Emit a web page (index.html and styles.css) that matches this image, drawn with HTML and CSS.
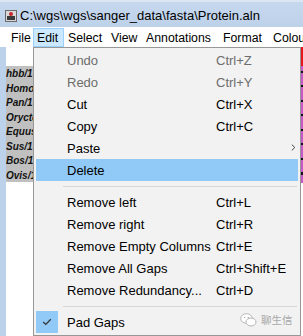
FILE: index.html
```html
<!DOCTYPE html>
<html>
<head>
<meta charset="utf-8">
<link rel="stylesheet" href="styles.css">
</head>
<body>
<div class="window">
  <div class="titlebar">
    <svg class="appicon" width="12" height="12" viewBox="0 0 12 12">
      <rect x="0.5" y="0.5" width="11" height="11" fill="#d8d8d8" stroke="#6a6a6a"/>
      <rect x="2" y="6" width="8" height="4" fill="#3a3a3a"/>
      <circle cx="6" cy="4" r="2" fill="#c8262a"/>
    </svg>
    <span class="title">C:\wgs\wgs\sanger_data\fasta\Protein.aln</span>
  </div>
  <div class="menubar">
    <span class="mitem m-file">File</span>
    <span class="mitem m-edit active">Edit</span>
    <span class="mitem m-select">Select</span>
    <span class="mitem m-view">View</span>
    <span class="mitem m-ann">Annotations</span>
    <span class="mitem m-format">Format</span>
    <span class="mitem m-colour">Colour</span>
  </div>
  <div class="main">
    <div class="leftstrip"></div>
    <div class="names">
      <div class="names-top"></div>
      <div class="names-list">
        <div class="nm">hbb/1-146</div>
        <div class="nm">Homo/1-146</div>
        <div class="nm">Pan/1-146</div>
        <div class="nm">Oryctolagus</div>
        <div class="nm">Equus/1-146</div>
        <div class="nm">Sus/1-146</div>
        <div class="nm">Bos/1-146</div>
        <div class="nm">Ovis/1-146</div>
      </div>
    </div>
    <div class="alignment">
      <div class="seq-red"></div>
      <div class="seq-mag"></div>
    </div>
  </div>

  <div class="dropdown">
    <div class="item disabled"><span class="lbl">Undo</span><span class="sc">Ctrl+Z</span></div>
    <div class="item disabled"><span class="lbl">Redo</span><span class="sc">Ctrl+Y</span></div>
    <div class="item"><span class="lbl">Cut</span><span class="sc">Ctrl+X</span></div>
    <div class="item"><span class="lbl">Copy</span><span class="sc">Ctrl+C</span></div>
    <div class="item"><span class="lbl">Paste</span><span class="sc"></span>
      <svg class="arrow" width="5" height="7" viewBox="0 0 5 7"><path d="M0.8 0.6 L3.8 3.5 L0.8 6.4" fill="none" stroke="#444" stroke-width="1"/></svg>
    </div>
    <div class="item hl"><span class="lbl">Delete</span><span class="sc"></span></div>
    <div class="sep"></div>
    <div class="item"><span class="lbl">Remove left</span><span class="sc">Ctrl+L</span></div>
    <div class="item"><span class="lbl">Remove right</span><span class="sc">Ctrl+R</span></div>
    <div class="item"><span class="lbl">Remove Empty Columns</span><span class="sc">Ctrl+E</span></div>
    <div class="item"><span class="lbl">Remove All Gaps</span><span class="sc">Ctrl+Shift+E</span></div>
    <div class="item"><span class="lbl">Remove Redundancy...</span><span class="sc">Ctrl+D</span></div>
    <div class="sep"></div>
    <div class="item checked">
      <span class="check"><svg width="10" height="8" viewBox="0 0 10 8"><path d="M1.2 4 L3.8 6.4 L8.8 1.2" fill="none" stroke="#333" stroke-width="1.3"/></svg></span>
      <span class="lbl">Pad Gaps</span><span class="sc"></span>
    </div>
    <div class="watermark">
      <svg width="17" height="14" viewBox="0 0 17 14">
        <ellipse cx="6.5" cy="5.5" rx="5.8" ry="4.8" fill="#fff" stroke="#b5b5b5" stroke-width="1"/>
        <ellipse cx="11" cy="9" rx="5" ry="4" fill="#fff" stroke="#b5b5b5" stroke-width="1"/>
        <circle cx="4.5" cy="4.5" r="0.8" fill="#b5b5b5"/>
        <circle cx="8.3" cy="4.5" r="0.8" fill="#b5b5b5"/>
      </svg>
      <span class="wm-text">聊生信</span>
    </div>
  </div>
</div>
</body>
</html>
```

FILE: styles.css
```css
html, body {
  margin: 0;
  padding: 0;
}
body {
  width: 303px;
  height: 336px;
  overflow: hidden;
  background: #ffffff;
  font-family: "Liberation Sans", Arial, "Noto Sans CJK SC", sans-serif;
}
.window {
  position: relative;
  width: 303px;
  height: 336px;
  overflow: hidden;
}
.titlebar {
  height: 27px;
  box-sizing: border-box;
  border-top: 2px solid #dbe6f3;
  background: linear-gradient(#c6d8ee, #bdd1e9);
  display: flex;
  align-items: center;
  padding-left: 5px;
}
.appicon {
  flex: none;
  margin-top: 2px;
}
.title {
  margin-left: 3px;
  font-size: 13px;
  color: #000;
  white-space: nowrap;
  margin-top: 1px;
}
.menubar {
  height: 20px;
  background: #ffffff;
  display: flex;
  align-items: stretch;
  box-sizing: border-box;
  padding-top: 1px;
}
.mitem {
  font-size: 12.3px;
  color: #000;
  display: flex;
  align-items: center;
  box-sizing: border-box;
  white-space: nowrap;
  border: 1px solid transparent;
  padding-left: 3px;
  flex: none;
}
.m-file { width: 33px; padding-left: 10px; }
.m-edit { width: 31px; }
.m-select { width: 43px; }
.m-view { width: 35px; }
.m-ann { width: 77px; }
.m-format { width: 50px; }
.m-colour { width: 40px; }
.mitem.active {
  background: #cce8ff;
  border-color: #99d1ff;
}
.main {
  display: flex;
  height: 289px;
}
.leftstrip {
  width: 6px;
  background: #bcd1ea;
  flex: none;
}
.names {
  width: 295px;
  flex: none;
  display: flex;
  flex-direction: column;
}
.names-top {
  height: 19px;
}
.names-list {
  background: #c0c0c0;
  height: 116px;
  padding-top: 1px;
  box-sizing: border-box;
}
.nm {
  height: 14.5px;
  line-height: 14.5px;
  font-style: italic;
  font-weight: bold;
  font-size: 10px;
  color: #111;
  white-space: nowrap;
}
.alignment {
  width: 2px;
  flex: none;
  display: flex;
  flex-direction: column;
}
.seq-red {
  height: 19px;
  background: #e8141b;
}
.seq-mag {
  height: 117px;
  background: repeating-linear-gradient(#c658c8 0 5px, #111 5px 7px, #c658c8 7px 14.5px);
}
.dropdown {
  position: absolute;
  left: 33px;
  top: 47px;
  width: 268px;
  height: 289px;
  box-sizing: border-box;
  background: #f2f2f2;
  border: 1px solid #979797;
  padding: 1px 2px;
  font-size: 13px;
}
.item {
  position: relative;
  height: 22px;
  display: flex;
  align-items: center;
  padding-left: 31px;
  color: #000;
  white-space: nowrap;
}
.item .lbl {
  width: 149px;
  flex: none;
}
.item .sc {
  flex: none;
}
.item.disabled {
  color: #6d6d6d;
}
.item.hl {
  background: #91c9f7;
}
.arrow {
  position: absolute;
  right: 2px;
  top: 7px;
}
.sep {
  height: 10px;
  display: flex;
  align-items: center;
  padding-left: 27px;
  padding-right: 1px;
}
.sep::after {
  content: "";
  display: block;
  height: 1px;
  flex: 1;
  background: #d7d7d7;
}
.check {
  position: absolute;
  left: 0;
  top: 0;
  width: 22px;
  height: 22px;
  background: #91c9f7;
  display: flex;
  align-items: center;
  justify-content: center;
}
.watermark {
  position: absolute;
  left: 206px;
  top: 264px;
  height: 16px;
  display: flex;
  align-items: center;
  gap: 4px;
}
.wm-text {
  font-family: "Noto Sans CJK SC", sans-serif;
  font-size: 10.5px;
  line-height: 16px;
  color: #a9a9a9;
}
```
